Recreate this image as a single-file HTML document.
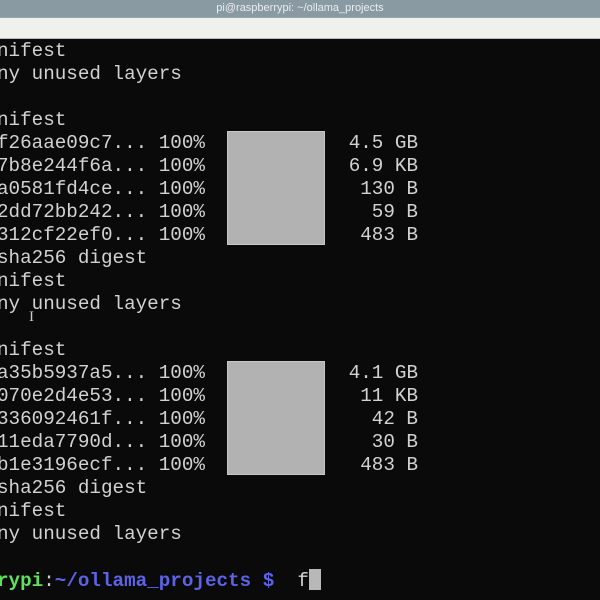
<!DOCTYPE html>
<html><head><style>
html,body{margin:0;padding:0;width:600px;height:600px;overflow:hidden;background:#0a0a0a}
#title{position:absolute;left:0;top:0;width:600px;height:17px;background:#8a9aa3;color:#e8eef0;font:11px "Liberation Sans",sans-serif;text-align:center;line-height:16px;border-bottom:1px solid #9aa8b0}
#bar{position:absolute;left:0;top:18px;width:600px;height:20px;background:#f0f0ec;border-bottom:1px solid #bbb}
#t{position:absolute;left:-3px;top:40px;margin:0;font:19.25px/23px "Liberation Mono",monospace;color:#d2d2d2;white-space:pre}
.sz{position:absolute;right:182px;font:19.25px/23px "Liberation Mono",monospace;color:#d2d2d2;white-space:pre}
.box{position:absolute;left:227px;width:98px;height:114px;background:#b2b2b2;border:1px solid #c8c8c8;box-sizing:border-box}
.g{color:#5fe05f;font-weight:bold}.b{color:#5c63e6;font-weight:bold}
.cur{display:inline-block;width:12px;height:21px;background:#b8b8b8;vertical-align:-4px}
</style></head><body>
<div id="title">pi@raspberrypi: ~/ollama_projects</div>
<div id="bar"></div>
<pre id="t">nifest
ny unused layers

nifest
f26aae09c7... 100%
7b8e244f6a... 100%
a0581fd4ce... 100%
2dd72bb242... 100%
312cf22ef0... 100%
sha256 digest
nifest
ny unused layers

nifest
a35b5937a5... 100%
070e2d4e53... 100%
336092461f... 100%
11eda7790d... 100%
b1e3196ecf... 100%
sha256 digest
nifest
ny unused layers

<span class="g">rypi</span>:<span class="b">~/ollama_projects $</span>  f<span class="cur"></span></pre>
<div class="sz" style="top:132px">4.5 GB</div>
<div class="sz" style="top:155px">6.9 KB</div>
<div class="sz" style="top:178px">130 B</div>
<div class="sz" style="top:201px">59 B</div>
<div class="sz" style="top:224px">483 B</div>
<div class="sz" style="top:362px">4.1 GB</div>
<div class="sz" style="top:385px">11 KB</div>
<div class="sz" style="top:408px">42 B</div>
<div class="sz" style="top:431px">30 B</div>
<div class="sz" style="top:454px">483 B</div>
<div class="box" style="top:131px"></div>
<div class="box" style="top:361px"></div>
<div style="position:absolute;left:29px;top:309px;color:#ccc;font:15px 'Liberation Serif',serif">I</div>
</body></html>
